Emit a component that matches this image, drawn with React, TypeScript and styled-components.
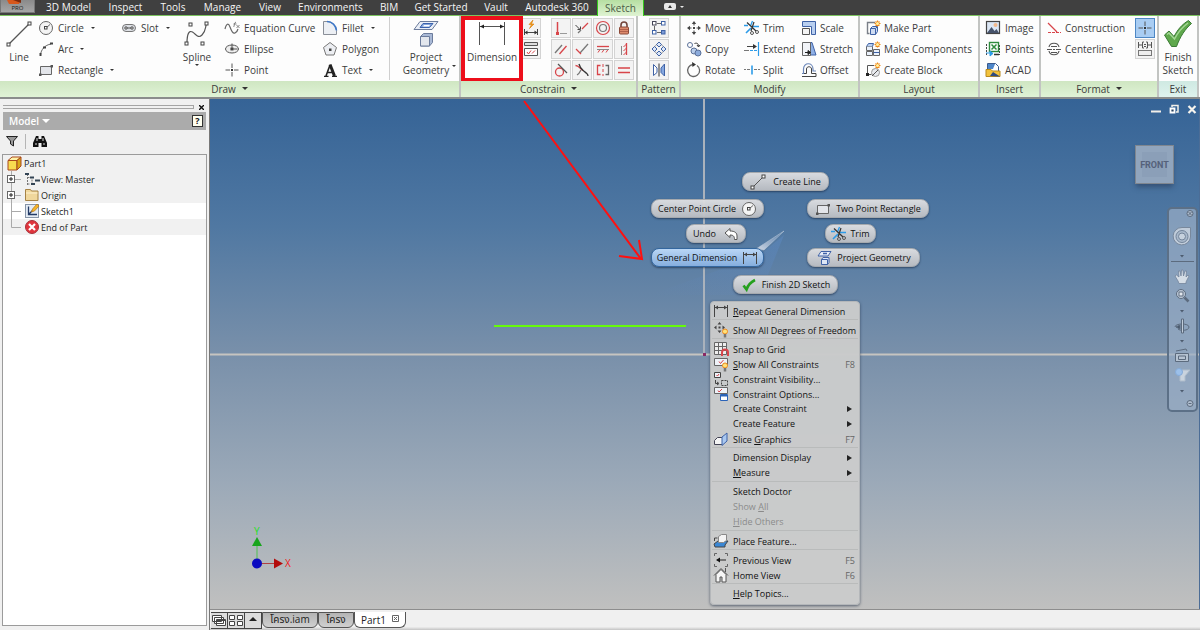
import React from "react";
import styled, { createGlobalStyle, css } from "styled-components";

const GlobalStyle = createGlobalStyle`
  * { box-sizing: border-box; }
  body { margin: 0; background: #f0f0f0; font-family: "Open Sans", "Noto Sans", sans-serif; font-size: 9px; }
  button { font: inherit; color: inherit; background: none; border: 0; padding: 0; margin: 0; }
  svg { display: block; flex: none; }
`;

/* ---------- icons ---------- */

const DARK = "#444";
const BLUE = "#3f62a6";
const RED = "#d8454a";
const SKY = "#2c9be8";

const Node = ({ x, y, c = DARK }: { x: number; y: number; c?: string }) => (
  <rect x={x - 1.5} y={y - 1.5} width="3" height="3" fill="#fff" stroke={c} strokeWidth="1" />
);

const Spark = ({ x, y }: { x: number; y: number }) => (
  <g stroke="#f08a1c" strokeWidth="1.2">
    <path d={`M${x - 3} ${y}h6M${x} ${y - 3}v6M${x - 2} ${y - 2}l4 4M${x + 2} ${y - 2}l-4 4`} />
    <circle cx={x} cy={y} r="1.5" fill="#fff3a0" stroke="none" />
  </g>
);

const art: Record<string, React.ReactNode> = {
  circle: (
    <g fill="none" stroke="#666">
      <circle cx="8" cy="8" r="6.5" fill="#f4f4f4" />
      <path d="M8 8l4-3.5" />
      <rect x="6.5" y="6.5" width="2.5" height="2.5" fill="#fff" stroke="#444" />
    </g>
  ),
  arc: (
    <g fill="none" stroke="#666">
      <path d="M2.5 14C3 8.500 7 4 13 3" />
      <path d="M2.500 12v3M5 6.500h3M12 2.500h3" stroke={DARK} strokeWidth="2" />
    </g>
  ),
  rect: (
    <g stroke="#666">
      <path d="M2.5 4.500h11v8h-11z" fill="#e3e5ea" />
      <rect x="12.500" y="3" width="2.500" height="2.500" fill="#555" stroke="none" />
      <rect x="1" y="11.500" width="2.500" height="2.500" fill="#555" stroke="none" />
    </g>
  ),
  slot: (
    <g stroke="#777" fill="#dcdfe4">
      <rect x="1.5" y="4.500" width="13" height="7" rx="3.500" />
      <path d="M5 8h6" stroke="#555" />
      <circle cx="5" cy="8" r="1.200" fill="#fff" stroke="#444" />
      <circle cx="11" cy="8" r="1.200" fill="#fff" stroke="#444" />
    </g>
  ),
  equation: (
    <g fill="none" stroke="#666">
      <path d="M1 9C2.500 3 4.500 3 6 7s3 7 5 6 2.500-2 3-4" strokeWidth="1.200" />
      <path d="M9.500 7c1 0 .5-5 2.500-5M9.500 4h3M12.500 5l3 3M15.500 5l-3 3" strokeWidth=".8" />
    </g>
  ),
  ellipse: (
    <g fill="none" stroke="#555">
      <ellipse cx="8" cy="8" rx="6.500" ry="4" fill="#eee" />
      <path d="M8 2.500v6M6.500 8h7" />
      <rect x="7" y="7" width="2" height="2" fill="#222" />
    </g>
  ),
  point: (
    <g fill="none" stroke="#555">
      <path d="M8 1.500V6M8 10v4.500M1.500 8H6M10 8h4.500" />
      <rect x="7" y="7" width="2" height="2" fill="#333" stroke="none" />
    </g>
  ),
  fillet: (
    <g fill="#eceff4">
      <path d="M1.500 14.500V1.500H5c5 0 9 4 9.500 9v4z" stroke="#8a8f98" />
      <path d="M5 1.500c5 0 9 4 9.500 9" fill="none" stroke="#3d77c8" strokeWidth="1.500" />
    </g>
  ),
  polygon: (
    <g fill="#eceef2" stroke="#777">
      <path d="M8 1.500l6.500 5L12 14H4L1.500 6.500z" />
      <rect x="7" y="7.500" width="2.500" height="2.500" fill="#444" stroke="none" />
    </g>
  ),
  text: (
    <g fill="none" stroke="#222">
      <path d="M4 14L8 3" strokeWidth="1.600" />
      <path d="M8 2.500L12.500 14" strokeWidth="3" />
      <path d="M5.500 10.500h6M2 14.300h4.500M10 14.300h5" strokeWidth="1.300" />
    </g>
  ),
  lperp: (
    <g fill="none" stroke="#999">
      <path d="M4.500 2v10" stroke={RED} strokeWidth="1.500" />
      <path d="M7 13.500h7" />
      <rect x="3" y="12" width="3" height="3" fill={RED} stroke="none" />
    </g>
  ),
  collinear: (
    <g fill="none">
      <path d="M1.500 5l4 4M3.500 9.500h3v-3" stroke="#444" />
      <path d="M4 13l3-3" stroke="#777" strokeWidth="1.300" />
      <path d="M8 9l6-6" stroke={RED} strokeWidth="1.300" />
    </g>
  ),
  concentric: (
    <g fill="none" strokeWidth="1.200">
      <circle cx="8" cy="8" r="6.500" stroke={RED} />
      <circle cx="8" cy="8" r="3.500" stroke="#777" />
    </g>
  ),
  lock: (
    <g>
      <path d="M5 7V5a3 3 0 016 0v2" fill="none" stroke="#74463c" strokeWidth="1.600" />
      <rect x="3.500" y="7" width="9" height="7" rx="1" fill="#dd8a6c" stroke="#8c4a38" />
      <path d="M4 9.500h8M4 11.500h8" stroke="#b0604a" />
    </g>
  ),
  parallel: (
    <g fill="none" strokeWidth="1.300">
      <path d="M2 12l7-8" stroke="#777" />
      <path d="M6.500 13l7-8" stroke={RED} />
    </g>
  ),
  perpendicular: (
    <g fill="none" strokeWidth="1.300">
      <path d="M6 12l8-9" stroke="#777" />
      <path d="M2 8l5 5" stroke={RED} />
    </g>
  ),
  horizontal: (
    <g fill="none">
      <path d="M2 5.500h12" stroke={RED} strokeWidth="1.300" />
      <path d="M2 8.500h12M5 8.500l-2 3M9 8.500l-2 3M13 8.500l-2 3" stroke={RED} />
      <path d="M2 8.500h12" stroke="#888" />
    </g>
  ),
  vertical: (
    <g fill="none">
      <path d="M5.500 5v9" stroke="#888" />
      <path d="M10.500 2v12" stroke={RED} strokeWidth="1.300" />
      <path d="M7.500 6l3-3M7.500 10l3-3M7.500 14l3-3" stroke={RED} />
    </g>
  ),
  tangent: (
    <g fill="none" strokeWidth="1.300">
      <circle cx="6.500" cy="10" r="4" stroke={RED} />
      <path d="M5 2l9 9" stroke="#555" />
    </g>
  ),
  smooth: (
    <g fill="none" strokeWidth="1.300">
      <path d="M1.500 3.500C5 3.500 6 7 9 8.500" stroke={RED} />
      <path d="M5 2c1 5 4 6 6 8s3 2 3 4" stroke="#333" />
      <path d="M3 13c2-1 3-3 4-5" stroke="#777" />
    </g>
  ),
  symmetric: (
    <g fill="none">
      <path d="M5.500 3.500h-3v9h3" stroke={RED} strokeWidth="1.300" />
      <path d="M8 2v12" stroke={RED} strokeDasharray="3 2" />
      <path d="M10.500 3.500h3v9h-3" stroke="#666" strokeWidth="1.300" />
    </g>
  ),
  equal: <path d="M2 6h12M2 10.500h12" stroke={RED} strokeWidth="1.300" />,
  autodim: (
    <g fill="none" stroke="#444">
      <path d="M1.500 9v6M14.500 9v6M2 12.500h12" />
      <path d="M1.500 12.500l3-2v4zM14.500 12.500l-3-2v4z" fill="#333" stroke="none" />
      <path d="M10 0L6 4.500h2.500L6.500 8.500 11 4H8.500z" fill="#f5a31a" stroke="#d97a0a" strokeWidth=".6" />
    </g>
  ),
  showcons: (
    <g fill="#fff" stroke="#555">
      <path d="M1.500 1.500h13v3h-13z" fill="#ddd" />
      <path d="M1.500 7.500h13v7h-13z" />
      <path d="M4 11l1.500 2L8 9.500M9 12.500l3-3" stroke={RED} fill="none" />
    </g>
  ),
  rectPattern: (
    <g stroke={BLUE} fill="#fff">
      <path d="M6 3.500h4M3.500 6v4M6 12.500h4" stroke="#666" />
      <rect x="1.500" y="1.500" width="3.500" height="3.500" stroke="#445" />
      <rect x="10.500" y="1.500" width="3.500" height="3.500" />
      <rect x="1.500" y="10.500" width="3.500" height="3.500" />
      <rect x="10.500" y="10.500" width="3.500" height="3.500" fill="#7c9bd6" />
    </g>
  ),
  circPattern: (
    <g fill="#dbe6f7" stroke={BLUE}>
      <circle cx="8" cy="8" r="5" fill="none" stroke="#999" />
      <path d="M8 1l2.500 2.500L8 6 5.500 3.500zM12.500 5.500L15 8l-2.500 2.500L10 8zM8 10l2.500 2.500L8 15l-2.500-2.500zM3.500 5.500L6 8l-2.500 2.500L1 8z" />
    </g>
  ),
  mirror: (
    <g stroke={BLUE}>
      <path d="M2.500 2.500v11l3.500-3V6z" fill="#fff" />
      <path d="M8 1.500v13" stroke="#333" />
      <path d="M13.500 2v12L10 10.500V6z" fill="#86a8e0" />
    </g>
  ),
  move: (
    <g fill={DARK}>
      <path d="M8 1l2.200 3H5.800zM8 15l2.200-3H5.800zM1 8l3-2.200v4.400zM15 8l-3-2.200v4.400z" />
      <path d="M8 3v2.500M8 10.500V13M3 8h2.500M10.500 8H13" stroke={DARK} />
      <rect x="7" y="7" width="2" height="2" />
    </g>
  ),
  copy: (
    <g fill="#dfe9f8" stroke="#5b7199">
      <circle cx="4" cy="4" r="2.500" fill="#fff" />
      <path d="M8.500 2.500c3-1 4 .5 4 3M11 4l1.500 2L14 4" fill="none" stroke="#333" />
      <circle cx="8" cy="10" r="3" fill="#b9cdea" />
      <circle cx="12" cy="12" r="3" fill="#8cabdc" />
    </g>
  ),
  rotate: (
    <g fill="none" stroke="#666" strokeWidth="1.300">
      <path d="M11 3.500A6 6 0 117 2.500" />
      <path d="M6 0l4 2.500L6.500 5z" fill="#333" stroke="none" />
    </g>
  ),
  trim: (
    <g fill="none">
      <path d="M0 5.500h4M2 13l5-5M9 6.500h6" stroke={SKY} strokeWidth="1.600" />
      <path d="M8.500 1l-2 5" stroke={SKY} strokeWidth="1.300" />
      <path d="M3 2.500L12 11M10 2L7 11" stroke="#333" strokeWidth="1.200" />
      <circle cx="8" cy="13" r="1.500" stroke="#555" />
      <circle cx="13" cy="12" r="1.500" stroke="#555" />
    </g>
  ),
  extend: (
    <g fill="none" stroke="#444">
      <path d="M0 9.500h5" stroke="#777" />
      <path d="M3 5.500h8" />
      <path d="M9 3l4 2.500L9 8z" fill="#333" stroke="none" />
      <path d="M6 9.500h8" stroke={SKY} strokeDasharray="3 1" />
      <path d="M14.500 1v14" stroke={SKY} strokeWidth="1.200" />
    </g>
  ),
  split: (
    <g fill="none" stroke="#777">
      <path d="M0 7.500h2M3 7.500h3M10 7.500h3M14 7.500h2" />
      <path d="M8 3.500v9" stroke={SKY} strokeWidth="1.600" />
    </g>
  ),
  scale: (
    <g stroke={BLUE}>
      <path d="M1.500 1.500h13v13h-4V6.500h-9z" fill="#b9cff0" />
      <path d="M1.500 8.500h7v6h-7z" fill="#f4f4f4" stroke="#555" />
    </g>
  ),
  stretch: (
    <g>
      <path d="M9 1.500h2l4 12.500H9z" fill="#8fb0e6" stroke={BLUE} />
      <path d="M1.500 1.500h8v13h-8z" fill="#f2f4f8" stroke="#666" />
      <path d="M4 11.500h4M7 9.500l2.500 2-2.500 2z" fill="#222" stroke="#222" />
    </g>
  ),
  offset: (
    <g fill="none">
      <path d="M1 11.500h1.500V7C2.500 0 12 0 12 7v2h3" stroke="#6b86b8" strokeWidth="1.200" />
      <path d="M1 14.500h14v-3h-4.500V7c0-3-5-3-5 0v4.500H3" stroke="#444" />
    </g>
  ),
  makePart: (
    <g fill="none" stroke="#7a7f88">
      <path d="M10 2.500H2.500v11h2" strokeWidth="1.400" />
      <path d="M5.500 8.500l2-2h5v5l-2 3h-5z" stroke={BLUE} fill="#cfdcf2" />
      <path d="M5.500 8.500h5v6M10.500 8.500l2-2" stroke={BLUE} />
      <Spark x={12.5} y={3.5} />
    </g>
  ),
  makeComponents: (
    <g fill="#eaf1fb" stroke="#666">
      <path d="M1.500 5.500h6v4h-6zM1.500 10.500h6v4h-6zM8.500 8.500h6v6h-6z" />
      <path d="M1.500 5.500l2-3h5l-1 3" fill="#b9d0f0" stroke={BLUE} />
      <path d="M8.500 11.500h6" stroke={BLUE} />
      <Spark x={12.5} y={3.5} />
    </g>
  ),
  createBlock: (
    <g fill="none" stroke="#555">
      <path d="M9 3.500H2.500v9h4" />
      <rect x="1" y="11" width="3" height="3" fill="#222" stroke="none" />
      <circle cx="10.500" cy="10.500" r="4" fill="#e8eaee" stroke="#999" />
      <path d="M7 14l6-6" />
      <Spark x={12.5} y={3.5} />
    </g>
  ),
  image: (
    <g>
      <rect x="1.500" y="1.500" width="13" height="12" fill="#dce7f5" stroke="#444" strokeWidth="1.200" />
      <path d="M2 13l4.500-6 3 4 2-2 2.500 4z" fill="#46536b" />
      <circle cx="10.500" cy="5" r="2" fill="#f3b98c" />
    </g>
  ),
  points: (
    <g>
      <path d="M1.500 3v11M14.500 4v10" stroke="#444" strokeDasharray="2 1" />
      <rect x="4.500" y="1.500" width="9" height="9" fill="#fff" stroke="#2e8b3d" strokeWidth="1.400" />
      <path d="M6.500 3.500l5 5M11.500 3.500l-5 5" stroke="#2e8b3d" strokeWidth="1.500" />
      <path d="M1 12h6M5 10l3 2.500L5 15z" stroke={SKY} fill={SKY} />
      <path d="M9 13.500h5" stroke="#333" strokeWidth="1.500" />
    </g>
  ),
  acad: (
    <g>
      <path d="M2.500 1.500h8l3 3v9h-11z" fill="#fff" stroke="#3b5a8c" />
      <path d="M3 2h7l-2 5H3z" fill="#4e86c9" />
      <path d="M1 7.500h5l1.500 1.500H15v5.500H1z" fill="#f2c23c" stroke="#b98a1c" />
      <path d="M5 14l3-4 7 4.500z" fill="#2e4a80" />
    </g>
  ),
  construction: (
    <g fill="none">
      <path d="M2 3l9 9" stroke={RED} strokeWidth="1.300" />
      <path d="M2 12.500h13" stroke={RED} strokeDasharray="3 1" />
    </g>
  ),
  centerline: (
    <g fill="none" stroke="#555">
      <path d="M3 6c1-5 9-5 10 0M3 10c1 5 9 5 10 0" strokeWidth="1.200" />
      <path d="M1 8.500h5M7 8.500h2M10 8.500h5M5 5.500h6M5 11.500h6" />
    </g>
  ),
  drivenDim: (
    <g fill="none" stroke="#555">
      <path d="M1.500 1v6M14.500 1v6M2 4h3M11 4h3M7 1H5.500v6H7M9 1h1.500v6H9M7 3.500h2M7 5.500h2" />
      <rect x="1.500" y="9.500" width="13" height="5" fill="#eee" stroke="#777" />
    </g>
  ),
  line: (
    <g>
      <path d="M3 13L13 3" stroke="#555" />
      <Node x={2.5} y={13.5} />
      <Node x={13.5} y={2.5} />
    </g>
  ),
  dimension: (
    <g fill="none" stroke={DARK}>
      <path d="M1.500 2v12M14.500 2v12M2 4.500h12" />
      <path d="M2 4.500l3-2v4zM14 4.500l-3-2v4z" fill={DARK} stroke="none" />
    </g>
  ),
  undo: (
    <path d="M2 7l5-4.500V5c5 0 7 2 7 5v3.500h-2.500C11.500 10 10 9 7 9v2.500z" fill="#fff" stroke="#555" />
  ),
  check: <path d="M2.500 8.500l3 4C7 8 10 5 14 3" fill="none" stroke="#25a01e" strokeWidth="2.600" />,
  projectGeom: (
    <g stroke={BLUE}>
      <path d="M5 1.500h10l-3 4.500H2z" fill="#e6edf9" />
      <path d="M7 3.500h4" strokeWidth="1.500" />
      <path d="M5.500 9.500h6v5h-6zM5.500 9.500l1.500-2h6v5l-1.500 2" fill="#dce6f5" />
    </g>
  ),
  dof: (
    <g>
      <path d="M6.500 0l2 2.500h-4zM6.500 11l2-2.500h-4zM1 5.500l2.500-2v4zM12 5.500l-2.500-2v4z" fill={DARK} />
      <rect x="5.500" y="4.500" width="2" height="2" fill={DARK} />
      <circle cx="12" cy="9.500" r="2.500" fill="#ffe27a" stroke="#f08a1c" />
      <path d="M12 12v3.500" stroke="#777" strokeWidth="2.500" />
    </g>
  ),
  snap: (
    <g fill="none" stroke="#666">
      <path d="M1.500 1.500h12v12h-12zM1.500 5.500h12M1.500 9.500h12M5.500 1.500v12M9.500 1.500v12" fill="#eee" />
      <path d="M9 15v-3.500a3 3 0 016 0V15" stroke={RED} strokeWidth="2" />
    </g>
  ),
  consBulb: (
    <g>
      <path d="M1.500 2.500h13v7h-13z" fill="#eef2f8" stroke="#666" />
      <path d="M6 5.500l1.500 2 3-3.500" fill="none" stroke={RED} />
      <circle cx="12" cy="9.500" r="2.500" fill="#ffe27a" stroke="#f08a1c" />
      <path d="M12 12v3.500" stroke="#777" strokeWidth="2.500" />
    </g>
  ),
  consVis: (
    <g fill="none" stroke="#444">
      <path d="M1.500 1.500h6v5h-6z" fill="#eef2f8" />
      <path d="M3.500 4l1 1 1.500-2" stroke={RED} />
      <path d="M2.500 9v3.500H5M4 11l2 1.500L4 14" />
      <path d="M8.500 9.500h6v5h-6z" strokeDasharray="2 1" />
    </g>
  ),
  consOpt: (
    <g>
      <path d="M1.500 1.500h13v6h-13z" fill="#eef2f8" stroke="#666" />
      <path d="M5 4.500l1 1.500 3-3" fill="none" stroke={RED} />
      <path d="M7.500 8.500h7v6h-7z" fill="#fff" stroke="#2a63b8" />
      <path d="M8 9.500h6" stroke="#2a63b8" strokeWidth="2" />
    </g>
  ),
  slice: (
    <g stroke="#445">
      <path d="M1.500 9.500l3-3h5v7h-8z" fill="#f4f4f4" />
      <path d="M9 6l5-4v8l-5 4.500z" fill="#a9c8f0" stroke={BLUE} />
    </g>
  ),
  place: (
    <g stroke="#444">
      <path d="M1 11l4-3h10l-3 4v2H2z" fill="#3a87d4" />
      <path d="M5.500 3.500l3-2h5v6l-3 2h-5z" fill="#f4f4f4" stroke="#888" />
      <path d="M1.500 8V5h3" fill="none" />
    </g>
  ),
  prevView: (
    <g fill="none" stroke="#666">
      <path d="M1.500 4V1.500H4M12 1.500h2.500V4M1.500 12v2.500H4M12 14.500h2.500V12" />
      <path d="M4 8h9" stroke="#222" />
      <path d="M3 8l4-2.500v5z" fill="#111" stroke="none" />
    </g>
  ),
  home: (
    <g stroke="#555">
      <path d="M3 7.500V15h4v-5h2v5h4V7.500L8 2.500z" fill="#f6f6f6" />
      <path d="M1 8.500l7-7 7 7M12.500 1v4" fill="none" />
    </g>
  ),
};

const Icon = ({ name }: { name: string }) => (
  <svg width="16" height="16" viewBox="0 0 16 16" aria-hidden="true">
    {art[name]}
  </svg>
);

const BigLine = () => (
  <svg width="28" height="32" viewBox="0 0 28 32">
    <path d="M4 25L24 5" stroke="#555" strokeWidth="1.200" />
    <Node x={3.5} y={25.5} />
    <Node x={24.5} y={4.5} />
  </svg>
);
const BigSpline = () => (
  <svg width="28" height="32" viewBox="0 0 28 32">
    <path d="M4 24C4 15 6 11 9.500 13S15 20 19 16s3-6 4.500-12" fill="none" stroke="#555" strokeWidth="1.200" />
    <Node x={3.5} y={24.5} />
    <Node x={7.5} y={5.5} />
    <Node x={19.5} y={24.5} />
    <Node x={23.5} y={4.5} />
  </svg>
);
const BigProject = () => (
  <svg width="28" height="32" viewBox="0 0 28 32">
    <g stroke="#6c7c9c">
      <path d="M8 2.500h18l-6 8H2z" fill="#e9eef7" />
      <path d="M11 4.500h10l-3.500 4H8z" fill="#86a6dc" stroke="#3a62ad" />
      <path d="M12 6h6l-1 1.500h-6z" fill="#fff" stroke="none" />
      <path d="M8.500 17.500l3-3h9v9l-3 3.500h-9z" fill="#a9b9d6" />
      <path d="M8.500 17.500h9V27h-9z" fill="#e3e7ee" />
    </g>
  </svg>
);
const BigDimension = () => (
  <svg width="28" height="32" viewBox="0 0 28 32">
    <g fill="none" stroke="#555">
      <path d="M1.500 3v23M26.500 3v23M2 7.500h24" />
      <path d="M2 7.500l4-2v4zM26 7.500l-4-2v4z" fill="#222" stroke="none" />
    </g>
  </svg>
);
const BigCheck = () => (
  <svg width="30" height="32" viewBox="0 0 30 32">
    <path
      d="M1.500 16l4.500-4 5 5.500C15 10 19 5.500 25.500 1.500l3 3C22 10 17 18 13.500 27.500h-5z"
      fill="#5fa84c"
      stroke="#3a7a34"
      strokeLinejoin="round"
    />
    <path d="M4 15.500L6 14l5.500 6C15 13 19 8.500 25 4" fill="none" stroke="#a4d795" strokeWidth="1.500" />
  </svg>
);

/* ---------- title tabs ---------- */

const Page = styled.div`
  display: flex;
  flex-direction: column;
  min-height: 100vh;
  color: #3c3c3c;
`;

const TabBar = styled.nav`
  display: flex;
  height: 16px;
  background: #404040;
  border-bottom: 1px solid #7cc35f;
`;

const AppButton = styled.button`
  position: relative;
  width: 35px;
  height: 13px;
  margin-right: 2px;
  background: linear-gradient(#8a8a8a, #a6a6a6);
  border: 1px solid #777;
  border-top: 0;
  color: #222;
  font-size: 6px;
  line-height: 17px;
`;

const AppLogo = styled.svg`
  position: absolute;
  left: 6px;
  top: 0;
`;

const RibbonTab = styled.button<{ $w: number; $active?: boolean }>`
  width: ${(p) => p.$w}px;
  height: 15px;
  font-size: 10px;
  line-height: 13px;
  white-space: nowrap;
  color: #f6f6f6;
  ${(p) =>
    p.$active &&
    css`
      height: 16px;
      background: linear-gradient(#b6dfa2, #dff3d2);
      border: 1px solid #35c81c;
      border-width: 0 1px;
      color: #4a5b45;
    `}
`;

const MinimizeRibbon = styled.button`
  display: flex;
  align-items: center;
  gap: 4px;
  margin-left: 20px;
  height: 13px;
`;

/* ---------- ribbon ---------- */

const Ribbon = styled.header`
  display: flex;
  height: 83px;
  background: #fdfdfd;
  border-bottom: 2px solid #8b8d8c;
`;

const Group = styled.section<{ $w: number }>`
  display: flex;
  flex-direction: column;
  flex: none;
  width: ${(p) => p.$w}px;
  border-right: 2px solid #c2c4c2;
`;

const GroupBody = styled.div`
  display: flex;
  flex: 1;
  align-items: flex-start;
`;

const GroupLabel = styled.div<{ $exit?: boolean }>`
  display: flex;
  justify-content: center;
  align-items: center;
  gap: 6px;
  height: 16px;
  padding-bottom: 1px;
  font-size: 10px;
  background: ${(p) => (p.$exit ? "linear-gradient(#cfe9e2, #dff3ee)" : "linear-gradient(#cfe6c2, #e0f3d6)")};
`;

const Col = styled.div<{ $w: number; $pad?: number }>`
  display: flex;
  flex-direction: column;
  flex: none;
  width: ${(p) => p.$w}px;
  padding: 1px 0 0 ${(p) => p.$pad ?? 0}px;
`;

const SmallButton = styled.button`
  display: flex;
  align-items: center;
  gap: 4px;
  height: 21px;
  font-size: 10px;
  white-space: nowrap;
`;

const ModifyButton = styled(SmallButton)`
  gap: 3px;
`;

const BigButton = styled.button<{ $w: number }>`
  position: relative;
  display: flex;
  flex: none;
  flex-direction: column;
  align-items: center;
  width: ${(p) => p.$w}px;
  padding-top: 3px;
  font-size: 10px;
  line-height: 13px;
  white-space: nowrap;
`;

const HighlightFrame = styled.div`
  display: flex;
  justify-content: center;
  flex: none;
  width: 62px;
  height: 66px;
  margin-bottom: -1px;
  background: #fff;
  box-shadow: inset 0 0 0 4px #ed0f1b;
`;

const Divider = styled.span`
  width: 1px;
  height: 63px;
  margin: 1px 3px 0 0;
  background: #cfcfcf;
`;

const IconGrid = styled.div<{ $cols: number; $left: number }>`
  display: grid;
  grid-template-columns: repeat(${(p) => p.$cols}, 20px);
  grid-auto-rows: 20px;
  gap: 1px;
  padding-top: 2px;
  margin-left: ${(p) => p.$left}px;
`;

const IconButton = styled.button<{ $on?: boolean }>`
  display: grid;
  place-items: center;
  background: ${(p) => (p.$on ? "#a9cdf3" : "#f3f3f3")};
  border: 1px solid ${(p) => (p.$on ? "#4d87c4" : "#d3d3d3")};
`;

const Clip = styled.div`
  width: 18px;
  display: flex;
  justify-content: flex-end;
  overflow: hidden;
`;

const Arrow = styled.span<{ $size?: number; $color?: string; $ml?: number }>`
  width: 0;
  height: 0;
  margin-left: ${(p) => p.$ml ?? 0}px;
  border: ${(p) => p.$size ?? 2}px solid transparent;
  border-top-color: ${(p) => p.$color ?? "#333"};
  border-bottom: 0;
`;

const CornerArrow = styled(Arrow)`
  position: absolute;
  right: 3px;
  top: 49px;
`;

/* ---------- browser panel ---------- */

const Main = styled.main`
  display: flex;
  flex: 1;
`;

const Panel = styled.aside`
  display: flex;
  flex-direction: column;
  flex: none;
  width: 209px;
  padding: 3px 2px 4px;
  background: #f0f0f0;
  color: #1d1d1d;
`;

const Grip = styled.div`
  display: flex;
  align-items: center;
  justify-content: space-between;
  height: 10px;
  padding-left: 1px;
`;

const GripLines = styled.span`
  width: 191px;
  height: 4px;
  border: 1px solid #a4a4a4;
  border-left: 0;
`;

const ClosePanel = styled.button`
  width: 12px;
  height: 10px;
  display: grid;
  place-items: center;
`;

const PanelTitle = styled.div`
  display: flex;
  align-items: center;
  justify-content: space-between;
  height: 18px;
  margin: 0 1px;
  padding: 0 3px 0 6px;
  background: #ababab;
`;

const ModelMenu = styled.button`
  display: flex;
  align-items: center;
  gap: 3px;
  color: #fff;
  font-size: 10px;
  font-weight: 600;
`;

const HelpButton = styled.button`
  width: 11px;
  height: 12px;
  border: 1px solid #333;
  background: #fffff0;
  color: #111;
  font-size: 9px;
  line-height: 10px;
  font-weight: 700;
`;

const PanelTools = styled.div`
  display: flex;
  align-items: center;
  gap: 7px;
  height: 24px;
  padding: 0 0 2px 4px;
`;

const ToolSep = styled.span`
  width: 1px;
  height: 15px;
  background: #b5b5b5;
`;

const Tree = styled.ul`
  flex: 1;
  margin: 0;
  padding: 0;
  list-style: none;
  background: #fff;
  border: 1px solid #9b9b9b;
`;

const TreeRow = styled.li<{ $plain?: boolean; $root?: boolean }>`
  display: flex;
  align-items: center;
  gap: ${(p) => (p.$root ? 2 : 1)}px;
  height: 16px;
  padding-left: ${(p) => (p.$root ? 4 : 3)}px;
  background: ${(p) => (p.$plain ? "#fff" : "#f1f1f1")};
  white-space: nowrap;
`;

/* ---------- canvas ---------- */

const Workspace = styled.div`
  display: flex;
  flex: 1;
  flex-direction: column;
  min-width: 0;
  border-left: 1px solid #777;
`;

const Canvas = styled.div`
  position: relative;
  flex: 1;
  overflow: hidden;
  background: linear-gradient(#356396 0%, #5078a2 25%, #7990aa 50%, #9ba9b8 75%, #c0c0bf 100%);
  border-right: 1px solid #4c6d96;
`;

const Scene = styled.svg`
  position: absolute;
  inset: 0;
`;

const Pill = styled.button<{ $x: number; $y: number; $w: number; $on?: boolean; $gap?: number }>`
  position: absolute;
  left: ${(p) => p.$x}px;
  top: ${(p) => p.$y}px;
  width: ${(p) => p.$w}px;
  height: 19px;
  display: flex;
  align-items: center;
  justify-content: center;
  gap: ${(p) => p.$gap ?? 5}px;
  border-radius: 8px;
  border: 1px solid ${(p) => (p.$on ? "#34679f" : "#a5a9ae")};
  background: ${(p) =>
    p.$on ? "linear-gradient(#b9d6f6, #86aedd)" : "linear-gradient(rgba(222,223,226,.96), rgba(186,189,194,.96))"};
  box-shadow: 0 1px 2px rgba(20, 35, 60, 0.6);
  color: #111;
  white-space: nowrap;
`;

const Menu = styled.div`
  position: absolute;
  left: 500px;
  top: 202px;
  width: 150px;
  padding: 1px 1px 3px;
  background: rgba(202, 203, 203, 0.97);
  border: 1px solid #b4b7ba;
  border-radius: 4px;
  box-shadow: 0 1px 3px rgba(20, 35, 60, 0.6);
`;

const MenuItem = styled.button<{ $disabled?: boolean }>`
  display: grid;
  grid-template-columns: 16px 1fr auto;
  column-gap: 4px;
  align-items: center;
  width: 100%;
  height: 15px;
  padding: 0 3px 0 1px;
  text-align: left;
  white-space: nowrap;
  color: ${(p) => (p.$disabled ? "#8b8b8b" : "#111")};
  u {
    text-underline-offset: 1px;
  }
`;

const MenuLine = styled.hr`
  height: 1px;
  margin: 1px 0 2px;
  border: 0;
  background: #b9bbbb;
`;

const Key = styled.span`
  color: #666;
`;

const SubArrow = styled.span`
  width: 0;
  height: 0;
  margin-right: 3px;
  border: 3px solid transparent;
  border-left: 5px solid #222;
  border-right: 0;
`;

const WindowButtons = styled.div`
  position: absolute;
  top: 5px;
  right: 2px;
  display: flex;
  gap: 8px;
`;

const ViewCube = styled.button`
  position: absolute;
  right: 25px;
  top: 46px;
  width: 39px;
  height: 39px;
  background: #8b9fb8;
  border: 1px solid #7f868f;
  box-shadow: inset 0 0 0 6px #91a5bd, 0 4px 5px -1px rgba(40, 60, 90, 0.6);
  color: #55617a;
  font-family: Roboto, "Open Sans", sans-serif;
  font-size: 9px;
  font-weight: 700;
`;

const NavBar = styled.div`
  position: absolute;
  right: 1px;
  top: 108px;
  width: 31px;
  height: 205px;
  border: 2px solid #5c7087;
  border-radius: 5px;
  background: rgba(154, 174, 198, 0.7);
`;

/* ---------- document tabs ---------- */

const DocBar = styled.footer`
  display: flex;
  align-items: flex-start;
  height: 21px;
  padding: 2px 0 0 1px;
  background: linear-gradient(#f0f0f0 0 84%, #c3c3c3);
  border-top: 1px solid #8d8d8d;
`;

const DocTool = styled.button`
  display: grid;
  place-items: center;
  width: 17px;
  height: 17px;
  border: 1px solid #444;
  border-left-width: 0;
  background: #dcdcdc;
`;

const DocTab = styled.button<{ $w: number; $on?: boolean }>`
  display: flex;
  justify-content: center;
  align-items: center;
  gap: 6px;
  width: ${(p) => p.$w}px;
  height: 16px;
  border: 1px solid #555;
  border-top: ${(p) => (p.$on ? "0" : "1px solid #555")};
  border-radius: 0 0 6px 6px;
  background: ${(p) => (p.$on ? "#fff" : "linear-gradient(#b4b4b4, #d0d0d0)")};
  color: #222;
  font-family: "Open Sans", "Noto Sans Thai", "Loma", sans-serif;
  font-size: 10px;
`;

/* ---------- data ---------- */

const tabs: [string, number][] = [
  ["3D Model", 63],
  ["Inspect", 51],
  ["Tools", 44],
  ["Manage", 55],
  ["View", 40],
  ["Environments", 81],
  ["BIM", 36],
  ["Get Started", 68],
  ["Vault", 42],
  ["Autodesk 360", 80],
];

const constraints = [
  "lperp", "collinear", "concentric", "lock",
  "parallel", "perpendicular", "horizontal", "vertical",
  "tangent", "smooth", "symmetric", "equal",
];

type Entry = { icon?: string; text: [string, string, string]; key?: string; sub?: boolean; disabled?: boolean };

const menu: Entry[][] = [
  [{ icon: "dimension", text: ["", "R", "epeat General Dimension"] }],
  [{ icon: "dof", text: ["Show All Degrees of Freedom", "", ""] }],
  [
    { icon: "snap", text: ["Snap to Grid", "", ""] },
    { icon: "consBulb", text: ["", "S", "how All Constraints"], key: "F8" },
    { icon: "consVis", text: ["Constraint Visibility...", "", ""] },
    { icon: "consOpt", text: ["Constraint Options...", "", ""] },
    { text: ["Create Constraint", "", ""], sub: true },
    { text: ["Create Feature", "", ""], sub: true },
    { icon: "slice", text: ["Slice ", "G", "raphics"], key: "F7" },
  ],
  [
    { text: ["Dimension Display", "", ""], sub: true },
    { text: ["", "M", "easure"], sub: true },
  ],
  [
    { text: ["Sketch Doctor", "", ""] },
    { text: ["Show ", "A", "ll"], disabled: true },
    { text: ["", "H", "ide Others"], disabled: true },
  ],
  [{ icon: "place", text: ["Place Feature...", "", ""] }],
  [
    { icon: "prevView", text: ["Previous View", "", ""], key: "F5" },
    { icon: "home", text: ["Home View", "", ""], key: "F6" },
  ],
  [{ text: ["", "H", "elp Topics..."] }],
];

const Small = ({ icon, label, drop }: { icon: string; label: string; drop?: boolean }) => (
  <SmallButton>
    <Icon name={icon} />
    {label}
    {drop && <Arrow $ml={3} />}
  </SmallButton>
);

const Mod = ({ icon, label }: { icon: string; label: string }) => (
  <ModifyButton>
    <Icon name={icon} />
    {label}
  </ModifyButton>
);

const Branch = ({ plus, last }: { plus?: boolean; last?: boolean }) => (
  <svg width="17" height="16" viewBox="0 0 17 16">
    <path d={last ? "M5.500 0v8.500H15" : "M5.500 0v16M5.500 8.500H15"} fill="none" stroke="#aaa" />
    {plus && (
      <g stroke="#666">
        <rect x="1.500" y="4.500" width="7" height="7" fill="#fff" />
        <path d="M3 8h4M5 6v4" stroke="#222" />
      </g>
    )}
  </svg>
);

const NavArt = () => (
  <svg width="27" height="201" viewBox="0 0 27 201" fill="none" stroke="#5c6b7e">
    <circle cx="21" cy="4.500" r="3" fill="#aebccd" />
    <path d="M19.500 3l3 3M22.500 3l-3 3" />
    <path d="M13 18.500h8.500V28a8.700 8.700 0 11-8.500-9.500z" fill="#c0ccda" stroke="#78889c" />
    <circle cx="13" cy="27.500" r="6" fill="#a9b9cb" stroke="#73849a" />
    <circle cx="13" cy="27.500" r="3.500" fill="#c7d2de" stroke="#73849a" />
    <path d="M2 52.500h23" />
    <path d="M9 72l-3-5 1.500-1L10 68l-.5-6h1.500l1 5 .5-6H14l.5 6 1.500-5h1.500L17 68l2-2 1 1-3 6v1.500H10z" fill="#d5dde6" stroke="#74849a" strokeWidth=".8" />
    <circle cx="12" cy="85" r="4.500" fill="#c0ccda" />
    <rect x="10" y="83" width="4" height="4" fill="#e2e8ee" />
    <path d="M15.500 88.500l4 4" strokeWidth="2.500" />
    <path d="M6 118c0-4 14-4 14 0s-9 4-11 2" />
    <path d="M12.500 110h2v14h-2z" fill="#c0ccda" />
    <path d="M7 118l4-2v4z" fill="#46566a" />
    <path d="M6.500 144.500h13v8h-13zM9.500 147h7v3.500h-7z" fill="#b6c3d2" />
    <path d="M7 142l10-2 1 2" />
    <path d="M7 162l4 5v5h5v-5l5-6h-7z" fill="#c9d3de" stroke="#aebccb" />
    <circle cx="10" cy="163" r="3.500" fill="#9cc0ea" stroke="#86abd8" />
    <circle cx="21" cy="194.500" r="3" fill="#aebccd" />
    <path d="M19.500 194.500h3" />
    <g fill="#4d5c6f" stroke="none">
      {[46, 101, 131, 181].map((y) => (
        <path key={y} d={`M11 ${y}h4l-2 2.500z`} />
      ))}
    </g>
  </svg>
);

export default function App() {
  return (
    <>
      <GlobalStyle />
      <Page>
        <TabBar>
          <AppButton>
            <AppLogo width="22" height="5" viewBox="0 0 22 5">
              <path d="M0 0h14l-2 4H2z" fill="#d8581c" />
              <path d="M6 0h8v3z" fill="#7e2a0c" />
            </AppLogo>
            PRO
          </AppButton>
          {tabs.map(([name, w]) => (
            <RibbonTab key={name} $w={w}>
              {name}
            </RibbonTab>
          ))}
          <RibbonTab $w={47} $active>
            Sketch
          </RibbonTab>
          <MinimizeRibbon aria-label="Minimize ribbon">
            <svg width="12" height="7" viewBox="0 0 12 7">
              <rect width="12" height="7" rx="2" fill="#e8e8e8" />
              <path d="M4 5l2-3 2 3z" fill="#333" />
            </svg>
            <Arrow $color="#e8e8e8" />
          </MinimizeRibbon>
        </TabBar>

        <Ribbon>
          <Group $w={461}>
            <GroupBody>
              <BigButton $w={38}>
                <BigLine />
                Line
              </BigButton>
              <Col $w={83}>
                <Small icon="circle" label="Circle" drop />
                <Small icon="arc" label="Arc" drop />
                <Small icon="rect" label="Rectangle" drop />
              </Col>
              <Col $w={61}>
                <Small icon="slot" label="Slot" drop />
              </Col>
              <BigButton $w={30}>
                <BigSpline />
                Spline
                <Arrow />
              </BigButton>
              <Col $w={110} $pad={12}>
                <Small icon="equation" label="Equation Curve" />
                <Small icon="ellipse" label="Ellipse" />
                <Small icon="point" label="Point" />
              </Col>
              <Col $w={67}>
                <Small icon="fillet" label="Fillet" drop />
                <Small icon="polygon" label="Polygon" />
                <Small icon="text" label="Text" drop />
              </Col>
              <Divider />
              <BigButton $w={66}>
                <BigProject />
                <span>Project</span>
                <span>Geometry</span>
                <CornerArrow />
              </BigButton>
            </GroupBody>
            <GroupLabel>
              Draw <Arrow $size={3} />
            </GroupLabel>
          </Group>

          <Group $w={177}>
            <GroupBody>
              <HighlightFrame>
                <BigButton $w={53}>
                  <BigDimension />
                  Dimension
                </BigButton>
              </HighlightFrame>
              <Clip>
                <IconGrid $cols={1} $left={0}>
                  <IconButton aria-label="Automatic dimension">
                    <Icon name="autodim" />
                  </IconButton>
                  <IconButton aria-label="Show constraints">
                    <Icon name="showcons" />
                  </IconButton>
                </IconGrid>
              </Clip>
              <IconGrid $cols={4} $left={10}>
                {constraints.map((c) => (
                  <IconButton key={c} aria-label={c}>
                    <Icon name={c} />
                  </IconButton>
                ))}
              </IconGrid>
            </GroupBody>
            <GroupLabel>
              Constrain <Arrow $size={3} />
            </GroupLabel>
          </Group>

          <Group $w={43}>
            <GroupBody>
              <IconGrid $cols={1} $left={11}>
                {["rectPattern", "circPattern", "mirror"].map((c) => (
                  <IconButton key={c} aria-label={c}>
                    <Icon name={c} />
                  </IconButton>
                ))}
              </IconGrid>
            </GroupBody>
            <GroupLabel>Pattern</GroupLabel>
          </Group>

          <Group $w={179}>
            <GroupBody>
              <Col $w={63} $pad={5}>
                <Mod icon="move" label="Move" />
                <Mod icon="copy" label="Copy" />
                <Mod icon="rotate" label="Rotate" />
              </Col>
              <Col $w={57}>
                <Mod icon="trim" label="Trim" />
                <Mod icon="extend" label="Extend" />
                <Mod icon="split" label="Split" />
              </Col>
              <Col $w={57}>
                <Mod icon="scale" label="Scale" />
                <Mod icon="stretch" label="Stretch" />
                <Mod icon="offset" label="Offset" />
              </Col>
            </GroupBody>
            <GroupLabel>Modify</GroupLabel>
          </Group>

          <Group $w={120}>
            <GroupBody>
              <Col $w={116} $pad={5}>
                <Mod icon="makePart" label="Make Part" />
                <Mod icon="makeComponents" label="Make Components" />
                <Mod icon="createBlock" label="Create Block" />
              </Col>
            </GroupBody>
            <GroupLabel>Layout</GroupLabel>
          </Group>

          <Group $w={61}>
            <GroupBody>
              <Col $w={58} $pad={5}>
                <Small icon="image" label="Image" />
                <Small icon="points" label="Points" />
                <Small icon="acad" label="ACAD" />
              </Col>
            </GroupBody>
            <GroupLabel>Insert</GroupLabel>
          </Group>

          <Group $w={118}>
            <GroupBody>
              <Col $w={94} $pad={5}>
                <Mod icon="construction" label="Construction" />
                <Mod icon="centerline" label="Centerline" />
              </Col>
              <IconGrid $cols={1} $left={0}>
                <IconButton $on aria-label="Center point">
                  <Icon name="point" />
                </IconButton>
                <IconButton aria-label="Driven dimension">
                  <Icon name="drivenDim" />
                </IconButton>
              </IconGrid>
            </GroupBody>
            <GroupLabel>
              Format <Arrow $size={3} />
            </GroupLabel>
          </Group>

          <Group $w={40}>
            <GroupBody>
              <BigButton $w={38}>
                <BigCheck />
                <span>Finish</span>
                <span>Sketch</span>
              </BigButton>
            </GroupBody>
            <GroupLabel $exit>Exit</GroupLabel>
          </Group>
        </Ribbon>

        <Main>
          <Panel>
            <Grip>
              <GripLines />
              <ClosePanel aria-label="Close">
                <svg width="5" height="5" viewBox="0 0 5 5">
                  <path d="M0 0l5 5M5 0L0 5" stroke="#111" strokeWidth="1.400" />
                </svg>
              </ClosePanel>
            </Grip>
            <PanelTitle>
              <ModelMenu>
                Model <Arrow $size={4} $color="#fff" />
              </ModelMenu>
              <HelpButton>?</HelpButton>
            </PanelTitle>
            <PanelTools>
              <svg width="12" height="12" viewBox="0 0 12 12">
                <path d="M.5 1.500h11L7.500 6v5L4.500 9V6z" fill="#999" stroke="#222" />
              </svg>
              <ToolSep />
              <svg width="14" height="12" viewBox="0 0 14 12">
                <path d="M3 1h2.500v3h3V1H11l3 7v4H8.500V8h-3v4H0V8z" fill="#111" />
                <path d="M2 9h2M10 9h2M4 3v3M10 3v3" stroke="#ddd" />
              </svg>
            </PanelTools>
            <Tree>
              <TreeRow $root>
                <svg width="15" height="15" viewBox="0 0 15 15" stroke="#a8481c" strokeLinejoin="round">
                  <path d="M1 4.500L5 1h9l-4 3.500z" fill="#fff3a8" />
                  <path d="M1 4.500h9V14H1z" fill="#f8dc50" />
                  <path d="M10 4.500L14 1v9l-4 4z" fill="#d9a718" />
                </svg>
                Part1
              </TreeRow>
              <TreeRow>
                <Branch plus />
                <svg width="16" height="16" viewBox="0 0 16 16">
                  <path d="M3.500 3v11M3.500 6.500H6M3.500 13H6M8 8.500v4" fill="none" stroke="#777" strokeDasharray="2 1" />
                  <path d="M1 3h4M6 6.500h4M7 13h4M11 9.500h5" stroke="#345" strokeWidth="2" />
                </svg>
                View: Master
              </TreeRow>
              <TreeRow>
                <Branch plus />
                <svg width="16" height="16" viewBox="0 0 16 16">
                  <path d="M1.500 13.500v-11h5l1 1.500h6.500v9.500z" fill="#f0d79c" stroke="#a58245" />
                  <path d="M2 6h11.500" stroke="#fff2cf" />
                </svg>
                Origin
              </TreeRow>
              <TreeRow $plain>
                <Branch />
                <svg width="16" height="16" viewBox="0 0 16 16">
                  <rect x="1.500" y="1.500" width="13" height="13" fill="#e3ebf5" stroke="#8795a8" />
                  <path d="M4.500 3.500v8H13M4.500 11.500L9 7" fill="none" stroke="#223a66" strokeWidth="1.300" />
                  <path d="M7.500 9l1-3L13 1l2 2-4.500 5z" fill="#f5b52a" stroke="#b3771a" strokeWidth=".7" />
                </svg>
                Sketch1
              </TreeRow>
              <TreeRow>
                <Branch last />
                <svg width="16" height="16" viewBox="0 0 16 16">
                  <circle cx="8" cy="8" r="6.500" fill="#e0353d" stroke="#a8323a" />
                  <path d="M5 5l6 6M11 5l-6 6" stroke="#fff" strokeWidth="2.200" />
                </svg>
                End of Part
              </TreeRow>
            </Tree>
          </Panel>

          <Workspace>
            <Canvas>
              <Scene width="100%" height="100%">
                <defs>
                  <linearGradient id="ray" x1="0" y1="1" x2="1" y2="0">
                    <stop offset="0" stopColor="#d4dbe6" />
                    <stop offset="1" stopColor="#9db4d4" stopOpacity=".2" />
                  </linearGradient>
                  <linearGradient id="glow" x1="1" y1="0" x2="0" y2="1">
                    <stop offset="0" stopColor="#5f8fd0" stopOpacity=".35" />
                    <stop offset="1" stopColor="#5f86c0" stopOpacity="0" />
                  </linearGradient>
                </defs>
                <path d="M574 136l-24 60H440l110-40z" fill="url(#glow)" />
                <path d="M494 0v255" stroke="#aab2bc" strokeWidth="2" />
                <path d="M0 255.500h990" stroke="#c6c4c0" strokeWidth="2" />
                <rect x="493" y="254" width="3" height="3" fill="#8a2a66" />
                <path d="M284 227h192" stroke="#66fa0a" strokeWidth="2" />
                <path d="M546 150l28-18-20 19z" fill="url(#ray)" stroke="#c4cfde" strokeOpacity=".5" />
                <g fill="none" stroke="#ff1010" strokeWidth="2">
                  <path d="M314 2l117 158M429 141l3 19-23-3" />
                </g>
                <path d="M47 464v-19" stroke="#4fc050" />
                <path d="M47 438l5 9h-10z" fill="#18a51c" />
                <path d="M47 464.500h18" stroke="#b04040" />
                <path d="M73 464.500l-9-5v10z" fill="#b30c0c" />
                <circle cx="47" cy="464.500" r="5" fill="#0a0ac0" />
                <text x="44" y="436" fontSize="10" fill="#22e022">Y</text>
                <text x="75" y="468" fontSize="10" fill="#f02020">X</text>
              </Scene>

              <Pill $x={532} $y={73} $w={87} $gap={7}>
                <Icon name="line" />
                Create Line
              </Pill>
              <Pill $x={441} $y={100} $w={113}>
                Center Point Circle
                <Icon name="circle" />
              </Pill>
              <Pill $x={597} $y={100} $w={122}>
                <Icon name="rect" />
                Two Point Rectangle
              </Pill>
              <Pill $x={476} $y={125} $w={60} $gap={7}>
                Undo
                <Icon name="undo" />
              </Pill>
              <Pill $x={615} $y={125} $w={51} $gap={3}>
                <Icon name="trim" />
                Trim
              </Pill>
              <Pill $x={441} $y={149} $w={113} $on>
                General Dimension
                <Icon name="dimension" />
              </Pill>
              <Pill $x={597} $y={149} $w={113} $gap={5}>
                <Icon name="projectGeom" />
                Project Geometry
              </Pill>
              <Pill $x={523} $y={176} $w={105}>
                <Icon name="check" />
                Finish 2D Sketch
              </Pill>

              <Menu role="menu">
                {menu.map((section, i) => (
                  <React.Fragment key={i}>
                    {i > 0 && <MenuLine />}
                    {section.map((e) => (
                      <MenuItem key={e.text.join("")} role="menuitem" disabled={e.disabled} $disabled={e.disabled}>
                        {e.icon ? <Icon name={e.icon} /> : <span />}
                        <span>
                          {e.text[0]}
                          {e.text[1] && <u>{e.text[1]}</u>}
                          {e.text[2]}
                        </span>
                        {e.key && <Key>{e.key}</Key>}
                        {e.sub && <SubArrow />}
                      </MenuItem>
                    ))}
                  </React.Fragment>
                ))}
              </Menu>

              <WindowButtons>
                <button aria-label="Minimize">
                  <svg width="10" height="11" viewBox="0 0 10 11">
                    <path d="M0 7.500h10" stroke="#f2efe8" strokeWidth="2" />
                  </svg>
                </button>
                <button aria-label="Restore">
                  <svg width="10" height="11" viewBox="0 0 10 11">
                    <path d="M3 3V1.500h6V8H7" fill="none" stroke="#f2efe8" strokeWidth="1.500" />
                    <path d="M1.500 4.500h4v4h-4z" fill="#25405f" stroke="#fff" strokeWidth="1.800" />
                  </svg>
                </button>
                <button aria-label="Close document">
                  <svg width="10" height="11" viewBox="0 0 10 11">
                    <path d="M1.500 2l7 7M8.500 2l-7 7" stroke="#f6f4ee" strokeWidth="2.200" />
                  </svg>
                </button>
              </WindowButtons>

              <ViewCube>FRONT</ViewCube>
              <NavBar>
                <NavArt />
              </NavBar>
            </Canvas>

            <DocBar>
              <DocTool aria-label="Cascade">
                <svg width="14" height="13" viewBox="0 0 14 13" fill="#fff" stroke="#444">
                  <path d="M.5 1.500h9v6h-9zM2.500 3.500h9v6h-9zM4.500 5.500h9v6h-9z" />
                  <path d="M4.500 6.500h9" />
                </svg>
              </DocTool>
              <DocTool aria-label="Tile">
                <svg width="14" height="13" viewBox="0 0 14 13" fill="#fff" stroke="#444">
                  <path d="M.5 1.500h5v4h-5zM8.500 1.500h5v4h-5zM.5 7.500h5v4h-5zM8.500 7.500h5v4h-5z" />
                </svg>
              </DocTool>
              <DocTool aria-label="More documents">
                <svg width="10" height="8" viewBox="0 0 10 8">
                  <path d="M5 0l4 4H1z" fill="#222" />
                </svg>
              </DocTool>
              <DocTab $w={56}>โครง.iam</DocTab>
              <DocTab $w={36}>โครง</DocTab>
              <DocTab $w={52} $on>
                Part1
                <svg width="7" height="10" viewBox="0 0 7 10">
                  <path d="M.5 .5h6v6h-6zM2 2l3 3M5 2L2 5" fill="none" stroke="#666" />
                </svg>
              </DocTab>
            </DocBar>
          </Workspace>
        </Main>
      </Page>
    </>
  );
}
